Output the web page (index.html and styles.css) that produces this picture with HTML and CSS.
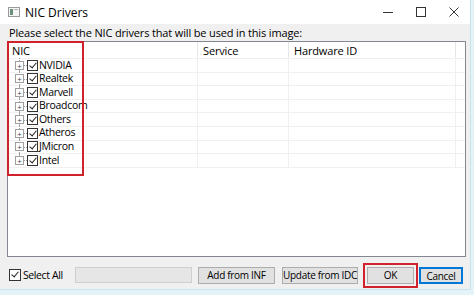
FILE: index.html
```html
<!DOCTYPE html>
<html lang="en">
<head>
  <meta charset="UTF-8">
  <title>NIC Drivers</title>
  <link rel="stylesheet" href="styles.css">
</head>
<body>
  <div class="window">
    <div class="titlebar">
      <svg class="app-icon" width="12" height="10" viewBox="0 0 12 10">
        <rect x="0.5" y="0.5" width="11" height="9" fill="#f4f4f4" stroke="#9a9a9a"/>
        <rect x="2" y="2" width="3" height="6" fill="#6b8f7a"/>
        <rect x="6" y="2" width="4" height="1" fill="#b9b9b9"/>
      </svg>
      <span class="title">NIC Drivers</span>
      <div class="caption-buttons">
        <span class="cap-btn">
          <svg width="10" height="10" viewBox="0 0 10 10"><line x1="0" y1="5.5" x2="10" y2="5.5" stroke="#333" stroke-width="1"/></svg>
        </span>
        <span class="cap-btn">
          <svg width="10" height="10" viewBox="0 0 10 10"><rect x="0.5" y="0.5" width="9" height="9" fill="none" stroke="#333"/></svg>
        </span>
        <span class="cap-btn">
          <svg width="10" height="10" viewBox="0 0 10 10"><path d="M0.5 0.5 L9.5 9.5 M9.5 0.5 L0.5 9.5" stroke="#333" stroke-width="1"/></svg>
        </span>
      </div>
    </div>

    <div class="content">
      <div class="prompt">Please select the NIC drivers that will be used in this image:</div>

      <div class="listview">
        <div class="highlight"></div>
        <div class="row header">
          <div class="col c-nic">NIC</div>
          <div class="col c-svc">Service</div>
          <div class="col c-hw">Hardware ID</div>
          <div class="col c-rest"></div>
        </div>
        <div id="rows"></div>
      </div>

      <div class="footer">
        <label class="select-all">
          <span class="check"></span>Select All
        </label>
        <div class="textbox"></div>
        <button class="btn btn-inf">Add from INF</button>
        <button class="btn btn-idc">Update from IDC</button>
        <span class="ok-wrap"><button class="btn btn-ok">OK</button></span>
        <button class="btn btn-cancel">Cancel</button>
      </div>
    </div>
  </div>

  <script>
    const vendors = ["NVIDIA", "Realtek", "Marvell", "Broadcom", "Others", "Atheros", "JMicron", "Intel"];
    const rowsElement = document.getElementById("rows");

    vendors.forEach((name, index) => {
      const row = document.createElement("div");
      row.className = "row item";
      row.innerHTML =
        '<div class="col c-nic"><span class="tree' + (index === vendors.length - 1 ? ' last' : '') + '">' +
        '<span class="expander">+</span></span><span class="check"></span>' + name + '</div>' +
        '<div class="col c-svc"></div><div class="col c-hw"></div><div class="col c-rest"></div>';
      rowsElement.appendChild(row);
    });
  </script>
</body>
</html>
```

FILE: styles.css
```css
body {
  margin: 0;
  background: #e3f3f7;
  font-family: "Open Sans", "Noto Sans", sans-serif;
  font-size: 11px;
  letter-spacing: -0.15px;
  color: #000;
}

.window {
  width: 470px;
  height: 289px;
  background: #f0f0f0;
  border-right: 1px solid #c7e4ec;
  border-bottom: 1px solid #c7e4ec;
  display: flex;
  flex-direction: column;
}

.titlebar {
  height: 24px;
  background: #fff;
  display: flex;
  align-items: center;
  padding-left: 8px;
}

.app-icon {
  margin-right: 5px;
}

.title {
  font-size: 12px;
  letter-spacing: 0;
  flex: 1;
  padding-top: 1px;
}

.caption-buttons {
  display: flex;
  height: 24px;
}

.cap-btn {
  width: 33px;
  display: flex;
  align-items: center;
  justify-content: center;
}

.content {
  flex: 1;
  padding: 0 7px 0 7px;
  display: flex;
  flex-direction: column;
}

.prompt {
  height: 17px;
  line-height: 17px;
  padding-left: 2px;
}

.listview {
  position: relative;
  height: 216px;
  background: #fff;
  border: 1px solid #828790;
  box-sizing: border-box;
  width: 459px;
}

.highlight {
  position: absolute;
  left: -1px;
  top: -1px;
  width: 77px;
  height: 135px;
  border: 2px solid #d0212d;
  box-sizing: border-box;
  pointer-events: none;
}

.row {
  display: flex;
  height: 13.6px;
  line-height: 13.6px;
  border-bottom: 1px solid #f0f0f0;
  box-sizing: border-box;
}

.row.item {
  font-size: 10.5px;
  letter-spacing: -0.3px;
}

.row.header {
  height: 17px;
  line-height: 17px;
  border-bottom: 1px solid #f0f0f0;
}

.col {
  border-right: 1px solid #f0f0f0;
  box-sizing: border-box;
  white-space: nowrap;
  display: flex;
  align-items: center;
}

.header .col {
  border-right-color: #e5e5e5;
}

.c-nic {
  width: 190px;
  padding-left: 4px;
}

.c-svc {
  width: 91px;
  padding-left: 5px;
}

.c-hw {
  width: 167px;
  padding-left: 5px;
}

.c-rest {
  flex: 1;
  border-right: none;
}

.tree {
  position: relative;
  width: 12px;
  height: 13.6px;
  margin-left: 3px;
  display: flex;
  align-items: center;
}

.tree::before {
  content: "";
  position: absolute;
  left: 4px;
  top: -1px;
  bottom: -1px;
  border-left: 1px dotted #a0a0a0;
}

.tree.last::before {
  bottom: 50%;
}

.tree::after {
  content: "";
  position: absolute;
  left: 4px;
  width: 8px;
  top: 50%;
  border-top: 1px dotted #a0a0a0;
}

.expander {
  position: relative;
  z-index: 1;
  width: 7px;
  height: 7px;
  border: 1px solid #a0a0a0;
  background: #fff;
  font-size: 8px;
  line-height: 7px;
  text-align: center;
  color: #444;
  box-sizing: content-box;
}

.check {
  width: 11px;
  height: 11px;
  border: 1px solid #333;
  background: #fff;
  margin-right: 1px;
  position: relative;
  flex-shrink: 0;
  box-sizing: border-box;
}

.check::after {
  content: "";
  position: absolute;
  left: 3px;
  top: 0px;
  width: 3px;
  height: 6px;
  border-right: 1px solid #222;
  border-bottom: 1px solid #222;
  transform: rotate(40deg);
}

.footer {
  display: flex;
  align-items: center;
  height: 28px;
  padding-top: 4px;
}

.select-all {
  display: flex;
  align-items: center;
  width: 66px;
  padding-left: 2px;
  font-size: 10.5px;
  letter-spacing: -0.4px;
  white-space: nowrap;
}

.select-all .check {
  width: 12px;
  height: 12px;
  margin-right: 2px;
}

.textbox {
  width: 117px;
  height: 16px;
  background: #e6e6e6;
  border: 1px solid #cfcfcf;
  box-sizing: border-box;
  margin-right: 6px;
}

.btn {
  height: 17px;
  font-family: inherit;
  font-size: 10px;
  letter-spacing: -0.3px;
  background: #e1e1e1;
  border: 1px solid #adadad;
  padding: 0;
  color: #000;
  white-space: nowrap;
}

.btn-inf {
  width: 77px;
  margin-right: 7px;
}

.btn-idc {
  width: 76px;
  margin-right: 5px;
}

.ok-wrap {
  border: 2px solid #d0212d;
  padding: 2px;
  display: flex;
  margin-right: 1px;
}

.btn-ok {
  width: 47px;
  height: 17px;
}

.btn-cancel {
  width: 44px;
  border: 2px solid #0078d7;
}
```
